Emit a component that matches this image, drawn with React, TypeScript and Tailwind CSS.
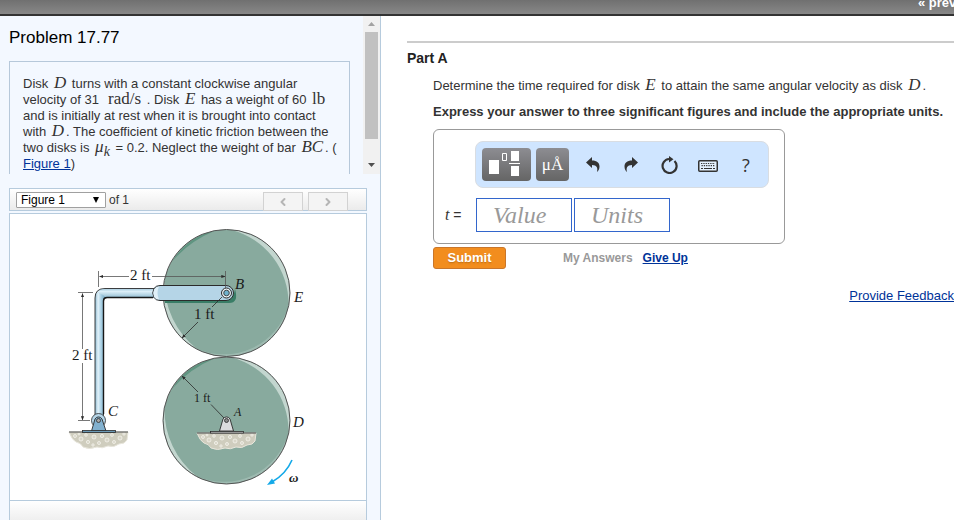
import type { ReactNode } from "react";
import { ChevronLeft, ChevronRight } from "lucide-react";

const DISK = "#88aa9e";
const INK = "#2b2b2b";

function M({ children, upright }: { children: ReactNode; upright?: boolean }) {
    return (
        <span
            className={
                upright
                    ? "mx-0.5 font-['Liberation_Serif',serif] text-[17px] leading-0"
                    : "mx-0.5 font-['Liberation_Serif',serif] text-[17px] leading-0 italic"
            }
        >
            {children}
        </span>
    );
}

function Disk({ cx, cy }: { cx: number; cy: number }) {
    return (
        <g transform={`translate(${cx} ${cy})`}>
            <circle r="63.5" fill={DISK} />
            <path d="M5 -63A63 63 0 0 1 62 12A76 76 0 0 0 5 -63Z" fill="#c3d6cf" />
            <path d="M-62 -12A63 63 0 0 0 -30 55.500A84 84 0 0 1 -62 -12Z" fill="#c3d6cf" />
            <path d="M-30 55.500A63 63 0 0 0 62 12A67 67 0 0 1 -30 55.500Z" fill="#9dbab0" />
            <path d="M-54 -32A63 63 0 0 1 -12 -62A110 110 0 0 0 -54 -32Z" fill="#5f9581" />
            <circle r="63.5" fill="none" stroke="#555" />
        </g>
    );
}

const PEBBLES = [
    [6, 4, 1.5], [12, 7, 2], [17, 3, 1.3], [19, 10, 1.6], [25, 5, 2], [30, 11, 1.5],
    [33, 4, 1.6], [38, 8, 2], [43, 3, 1.4], [45, 10, 1.5], [51, 6, 2], [55, 2, 1.2], [24, 13, 1.2], [10, 2, 1],
];

function Ground({ x, y }: { x: number; y: number }) {
    return (
        <g transform={`translate(${x} ${y})`}>
            <path d="M0 0H59L58 8Q56 12 50 12Q45 16 39 14Q33 17 28 15Q20 18 14 15Q12 11 7 10Q3 8 0 0Z" fill="#cfcdbe" stroke="#e8e6dc" strokeWidth="1" />
            {PEBBLES.map(([px, py, r]) => (
                <circle key={`${px}-${py}`} cx={px} cy={py} r={r} fill="#d8d6c8" stroke="#f4f3ec" strokeWidth="0.8" />
            ))}
            <path d="M0 0H59" stroke="#444" strokeWidth="1" />
        </g>
    );
}

function Figure() {
    return (
        <svg viewBox="10 214 356 286" className="block h-[286px] w-[356px]" role="img" aria-label="Disk E on bar BC resting on disk D">
            <defs>
                <linearGradient id="barV" gradientUnits="userSpaceOnUse" x1="95" x2="104" y1="0" y2="0">
                    <stop offset="0" stopColor="#8db9cf" />
                    <stop offset="0.35" stopColor="#e2f2fa" />
                    <stop offset="0.65" stopColor="#aed3e6" />
                    <stop offset="1" stopColor="#85b4cb" />
                </linearGradient>
                <linearGradient id="barH" gradientUnits="userSpaceOnUse" x1="0" x2="0" y1="288" y2="298">
                    <stop offset="0" stopColor="#9cc5da" />
                    <stop offset="0.35" stopColor="#dceff8" />
                    <stop offset="1" stopColor="#8dbad0" />
                </linearGradient>
                <marker id="tip" viewBox="0 0 6 6" refX="5.5" refY="3" markerWidth="5" markerHeight="5" orient="auto-start-reverse">
                    <path d="M0 .6L6 3L0 5.4Z" fill={INK} />
                </marker>
            </defs>

            <Disk cx={226.5} cy={293} />
            <Disk cx={226.5} cy={420.5} />

            {/* shadow of the bar on disk E */}
            <path d="M164 299H227Q234 298 235 289Q239 303 229 303H165Z" fill="#397d66" />

            {/* bent bar BC */}
            <path d="M95 416V298Q95 288.500 105 288.500H155V297.500H107Q103.500 297.500 103.500 301V416Z" fill="url(#barV)" stroke={INK} strokeWidth="0.9" />
            <path d="M105 289H154V297.500H106Q102 294 97.500 292.500Q100 289 105 289Z" fill="url(#barH)" />
            <path d="M103.500 414V301Q103.500 297.500 107 297.500H153" fill="none" stroke="#171717" strokeWidth="1.400" />
            <path d="M154 288.500Q156 285.500 160 285.500H226A7.500 7.500 0 0 1 226 300.500H160Q156 300.500 154 297.500Q151.500 293 154 288.500Z" fill="#b5d5e7" stroke={INK} />
            <path d="M154 289.500Q156.500 286.500 159 286.500Q156 293 159 299.500Q156 299.500 154 297Q152.500 293 154 289.500Z" fill="#e0f0f8" />
            <circle cx="226.500" cy="293" r="5" fill="#e6edf1" stroke={INK} />
            <circle cx="226.500" cy="293" r="2.800" fill="#6fb1cc" stroke={INK} strokeWidth="0.800" />

            {/* pin at C */}
            <Ground x={69} y={432} />
            <circle cx="98.500" cy="420.500" r="7" fill="#b5d5e7" stroke={INK} strokeWidth="0.800" />
            <path d="M91.500 431L95 419A4 4 0 0 1 102 419L106 431Z" fill="#82b1cf" stroke={INK} strokeWidth="0.900" />
            <circle cx="98.500" cy="420.500" r="2" fill="#aaa" stroke={INK} strokeWidth="0.8" />
            <rect x="82.500" y="430.500" width="33" height="2" fill="#6b99b5" stroke={INK} strokeWidth="0.800" />

            {/* pin at A */}
            <Ground x={197} y={433} />
            <path d="M219.500 431L223 419A4 4 0 0 1 230 419L233.500 431Z" fill="#dcdcde" stroke={INK} strokeWidth="0.900" />
            <circle cx="226.500" cy="420.500" r="2" fill="#888" stroke={INK} strokeWidth="0.8" />
            <rect x="210.500" y="431.500" width="33" height="1.500" fill="#ddd" stroke={INK} strokeWidth="0.800" />

            {/* dimension lines */}
            <g stroke="#555" strokeWidth="0.800" fill="none">
                <path d="M98.500 271V287M225.500 271V288M78 292.500H93M78 420.500H90" />
                <path d="M129 276.500H99.500" markerEnd="url(#tip)" />
                <path d="M152 276.500H225" markerEnd="url(#tip)" />
                <path d="M82.500 349V293.500" markerEnd="url(#tip)" />
                <path d="M82.500 363V420" markerEnd="url(#tip)" />
                <path d="M222 297L212 307M198 322L182 338" stroke={INK} markerEnd="url(#tip)" />
                <path d="M224 418L211 404.500M198 392L182 376" stroke={INK} markerEnd="url(#tip)" />
            </g>

            <g className="font-['Liberation_Serif',serif]" fontSize="15" fill="#1a1a1a">
                <text x="130" y="280">2 ft</text>
                <text x="72" y="360">2 ft</text>
                <text x="194" y="319">1 ft</text>
                <text x="194" y="402" fontSize="12">1 ft</text>
                <g fontStyle="italic">
                    <text x="235" y="289">B</text>
                    <text x="294" y="302">E</text>
                    <text x="108" y="416">C</text>
                    <text x="234" y="416" fontSize="12">A</text>
                    <text x="293" y="427">D</text>
                    <text x="289" y="482" fontSize="13" fontWeight="bold">ω</text>
                </g>
            </g>
            <path d="M292 460Q286 474 272 482" fill="none" stroke="#14a9e8" strokeWidth="1.600" />
            <path d="M267 485L272 478.500L275 483.500Z" fill="#14a9e8" />
        </svg>
    );
}

function Sidebar() {
    return (
        <aside className="flex w-[381px] shrink-0 flex-col border-r border-[#b6cbdd] bg-[#f3f8ff]">
            <div className="flex h-[158px] shrink-0 overflow-hidden">
                <div className="min-w-0 flex-1 pt-3 pr-[13px] pl-[9px]">
                    <h1 className="text-[17px] leading-5 text-black">Problem 17.77</h1>
                    <div className="mt-[13px] border border-[#b6c8da] pt-3.5 pb-3 pl-[13px] text-[13px] leading-4 whitespace-nowrap">
                        Disk <M>D</M> turns with a constant clockwise angular<br />
                        velocity of 31 &nbsp;<M upright>rad/s</M> . Disk <M>E</M> has a weight of 60 <M upright>lb</M><br />
                        and is initially at rest when it is brought into contact<br />
                        with <M>D</M>. The coefficient of kinetic friction between the<br />
                        two disks is <M>μ<sub className="text-sm leading-0">k</sub></M> = 0.2. Neglect the weight of bar <M>BC</M>. (<br />
                        <a href="#figure" className="text-[#039] underline">Figure 1</a>)
                    </div>
                </div>
                <div className="flex w-[17px] shrink-0 flex-col items-center bg-[#f1f1f1]">
                    <svg viewBox="0 0 17 16" className="h-4 w-[17px] shrink-0"><path d="M5 10H12L8.500 6Z" fill="#a3a3a3" /></svg>
                    <div className="h-[107px] w-[13px] bg-[#c1c1c1]" />
                    <svg viewBox="0 0 17 17" className="mt-auto h-[17px] w-[17px] shrink-0"><path d="M5 6H12L8.500 10Z" fill="#505050" /></svg>
                </div>
            </div>

            <div className="mt-3.5 mr-[13px] ml-[9px] flex h-[23px] shrink-0 items-start border border-[#b6cbdd] bg-linear-to-b from-white to-[#ebebeb] pt-[3px] pl-1.5 text-xs">
                <div className="relative">
                    <select aria-label="Figure" className="block h-4 w-[90px] appearance-none rounded-[1px] border border-[#a0a0a0] bg-white pl-1 text-xs leading-[14px] text-black">
                        <option>Figure 1</option>
                    </select>
                    <svg viewBox="0 0 6 6" className="pointer-events-none absolute top-[5px] right-[7px] h-1.5 w-1.5"><path d="M0 0H6L3 6Z" fill="#000" /></svg>
                </div>
                <span className="ml-[3px] leading-4">of 1</span>
                <div className="mr-[18px] ml-auto flex gap-[5px] text-[#b5b5b5]">
                    <button aria-label="Previous figure" className="flex h-[19px] w-10 items-center justify-center border border-[#d2d2d2] bg-[#f4f4f4]">
                        <ChevronLeft size={12} strokeWidth={4} />
                    </button>
                    <button aria-label="Next figure" className="flex h-[19px] w-10 items-center justify-center border border-[#d2d2d2] bg-[#f4f4f4]">
                        <ChevronRight size={12} strokeWidth={4} />
                    </button>
                </div>
            </div>
            <div id="figure" className="mt-0.5 mr-[13px] ml-[9px] shrink-0 border border-[#b6cbdd] bg-white">
                <Figure />
            </div>
            <div className="mr-[13px] ml-[9px] h-6 shrink-0 border-x border-[#b6cbdd] bg-linear-to-b from-white to-[#ebebeb]" />
        </aside>
    );
}

function Toolbar() {
    const tile = "flex h-[33px] items-center justify-center rounded-sm bg-linear-to-b from-[#8d8d92] to-[#656565] text-white";
    return (
        <div className="flex h-[47px] w-[294px] items-center rounded-lg border border-[#d9dde2] bg-[#cfe5ff] pl-1.5 text-[#333]">
            <button aria-label="Templates" className={`${tile} w-[49px]`}>
                <svg viewBox="0 0 49 33" className="h-[33px] w-[49px]">
                    <path d="M7 12H17V26H7ZM29 3H37V13H29ZM29 18H37V28H29ZM27 15H38V16H27Z" fill="#fff" />
                    <path d="M20.500 5.500H24.500V12.500H20.500Z" fill="none" stroke="#fff" />
                </svg>
            </button>
            <button aria-label="Symbols" className={`${tile} ml-[5px] w-[33px] font-['Liberation_Serif',serif] text-[17px]`}>μÅ</button>
            <button aria-label="Undo" className="ml-[17px]">
                <svg viewBox="0 0 14 15" className="h-[15px] w-3.5"><path d="M0 5.500L6 0V3.500C11 3.500 13.500 6 13.500 9.500C13.500 12 12.500 14 11 15C12 11 11 8 6 8V11Z" fill="currentColor" /></svg>
            </button>
            <button aria-label="Redo" className="ml-6">
                <svg viewBox="0 0 14 15" className="h-[15px] w-3.5"><path d="M14 5.500L8 0V3.500C3 3.500.5 6 .5 9.500C.5 12 1.500 14 3 15C2 11 3 8 8 8V11Z" fill="currentColor" /></svg>
            </button>
            <button aria-label="Reset" className="ml-[23px]">
                <svg viewBox="0 0 17 18" className="h-[18px] w-[17px]">
                    <path d="M13.500 5A7 7 0 1 1 8 3" fill="none" stroke="currentColor" strokeWidth="2.200" />
                    <path d="M8 0L12.500 3.300L8 6.600Z" fill="currentColor" />
                </svg>
            </button>
            <button aria-label="Keyboard" className="ml-5 pt-[3px]">
                <svg viewBox="0 0 20 12" className="h-3 w-5">
                    <rect x="0.750" y="0.750" width="18.500" height="10.500" rx="1" fill="#e4f0fd" stroke="currentColor" strokeWidth="1.500" />
                    <path d="M3 3.500H17M3.500 5.700H17" stroke="currentColor" strokeWidth="1.200" strokeDasharray="1.300 1" />
                    <path d="M3 8.500H5M6 8.500H14M15 8.500H17" stroke="currentColor" strokeWidth="1.200" />
                </svg>
            </button>
            <button aria-label="Help" className="ml-6 font-['Open_Sans',sans-serif] text-lg leading-5 font-medium">?</button>
        </div>
    );
}

function PartA() {
    const field = "h-[34px] w-24 border border-[#36c] bg-white pl-4 font-['Liberation_Serif',serif] text-2xl italic text-[#333] outline-none placeholder:text-[#999]";
    return (
        <main className="min-w-0 flex-1 pt-[25px] pl-[26px]">
            <div className="h-0.5 bg-[#ccc]" />
            <h2 className="mt-[5px] text-sm leading-5 font-bold text-[#222]">Part A</h2>
            <div className="pl-[26px] text-[13px] whitespace-nowrap">
                <p className="mt-2.5 leading-4">
                    Determine the time required for disk <M>E</M> to attain the same angular velocity as disk <M>D</M>.
                </p>
                <p className="mt-2.5 leading-4 font-bold">
                    Express your answer to three significant figures and include the appropriate units.
                </p>
                <div className="mt-[9px] w-[352px] rounded-md border border-[#999] pt-[11px] pb-[11px] pl-[41px]">
                    <Toolbar />
                    <div className="mt-[10px] -ml-[30px] flex items-center">
                        <label htmlFor="value" className="w-[31px] text-sm">
                            <i className="font-['Liberation_Serif',serif] text-base">t</i> =
                        </label>
                        <input id="value" placeholder="Value" className={field} />
                        <input aria-label="Units" placeholder="Units" className={`${field} ml-0.5`} />
                    </div>
                </div>
                <div className="mt-[3px] flex items-center text-xs font-bold">
                    <button className="h-[22px] w-[73px] rounded-[3px] border border-[#c9762a] bg-[#f28d1e] text-[13px] text-white text-shadow-sm">Submit</button>
                    <span className="ml-[57px] text-[#999]">My Answers</span>
                    <a href="#give-up" className="ml-2.5 text-[#039] underline">Give Up</a>
                </div>
            </div>
            <div className="mt-[18px] flex justify-end text-[13px] leading-[18px] whitespace-nowrap">
                <a href="#feedback" className="text-[#039] underline">Provide Feedback</a>
            </div>
        </main>
    );
}

export default function App() {
    return (
        <div className="flex h-screen flex-col overflow-hidden bg-white font-['Liberation_Sans',Arial,sans-serif] text-[#333]">
            <header className="flex h-4 shrink-0 justify-end overflow-hidden border-b-2 border-[#333] bg-linear-to-b from-[#707070] to-[#888]">
                <a href="#previous" className="-mt-[5px] -mr-[29px] text-[13px] leading-4 font-bold whitespace-nowrap text-white">« previous</a>
            </header>
            <div className="flex min-h-0 flex-1 overflow-hidden">
                <Sidebar />
                <PartA />
            </div>
        </div>
    );
}
